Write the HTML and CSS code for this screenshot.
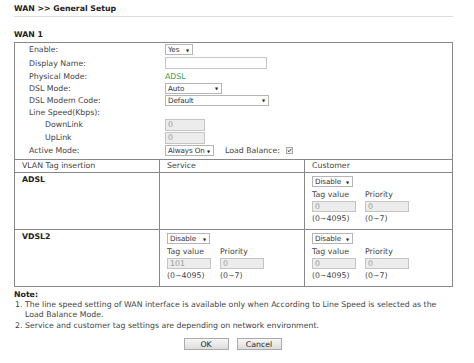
FILE: index.html
```html
<!DOCTYPE html>
<html>
<head>
<meta charset="utf-8">
<link rel="stylesheet" href="styles.css">
</head>
<body>
<div class="page">
  <div class="title">WAN &gt;&gt; General Setup</div>
  <div class="section">WAN 1</div>
  <div class="box">
    <div class="form">
      <div class="row r13"><span class="lbl">Enable:</span><span class="sel w28">Yes<i>▼</i></span></div>
      <div class="row r14"><span class="lbl">Display Name:</span><span class="txt w102"></span></div>
      <div class="row"><span class="lbl">Physical Mode:</span><span class="green">ADSL</span></div>
      <div class="row"><span class="lbl">DSL Mode:</span><span class="sel w57">Auto<i>▼</i></span></div>
      <div class="row"><span class="lbl">DSL Modem Code:</span><span class="sel w104">Default<i>▼</i></span></div>
      <div class="row"><span class="lbl">Line Speed(Kbps):</span></div>
      <div class="row r13"><span class="lbl sub">DownLink</span><span class="inp w40">0</span></div>
      <div class="row r13"><span class="lbl sub">UpLink</span><span class="inp w40">0</span></div>
      <div class="row r13"><span class="lbl">Active Mode:</span><span class="sel w49">Always On<i>▼</i></span><span class="lb">Load Balance:</span><span class="chk"><svg width="7" height="7" viewBox="0 0 7 7"><path d="M1.2 3.6 L2.8 5.2 L5.9 1.6" fill="none" stroke="#333" stroke-width="1.3"/></svg></span></div>
    </div>
    <div class="vlan">
      <div class="th">VLAN Tag insertion</div>
      <div class="th">Service</div>
      <div class="th last">Customer</div>

      <div class="td name"><b>ADSL</b></div>
      <div class="td"></div>
      <div class="td last">
        <div class="tag">
          <span class="sel w41">Disable<i>▼</i></span>
          <div class="pair"><span>Tag value</span><span>Priority</span></div>
          <div class="pair"><span class="inp w44">0</span><span class="inp w44">0</span></div>
          <div class="pair"><span>(0~4095)</span><span>(0~7)</span></div>
        </div>
      </div>

      <div class="td name bottom"><b>VDSL2</b></div>
      <div class="td bottom">
        <div class="tag">
          <span class="sel w43">Disable<i>▼</i></span>
          <div class="pair"><span>Tag value</span><span>Priority</span></div>
          <div class="pair"><span class="inp w44">101</span><span class="inp w44">0</span></div>
          <div class="pair"><span>(0~4095)</span><span>(0~7)</span></div>
        </div>
      </div>
      <div class="td last bottom">
        <div class="tag">
          <span class="sel w41">Disable<i>▼</i></span>
          <div class="pair"><span>Tag value</span><span>Priority</span></div>
          <div class="pair"><span class="inp w44">0</span><span class="inp w44">0</span></div>
          <div class="pair"><span>(0~4095)</span><span>(0~7)</span></div>
        </div>
      </div>
    </div>
  </div>
  <div class="note">
    <div class="note-h">Note:</div>
    <ol>
      <li>The line speed setting of WAN interface is available only when According to Line Speed is selected as the Load Balance Mode.</li>
      <li>Service and customer tag settings are depending on network environment.</li>
    </ol>
  </div>
  <div class="buttons">
    <span class="btn">OK</span>
    <span class="btn">Cancel</span>
  </div>
</div>
</body>
</html>
```
FILE: styles.css
```css
html, body {
  margin: 0;
  padding: 0;
  background: #fff;
}
body {
  font-family: "DejaVu Sans", Verdana, sans-serif;
  font-size: 7.8px;
  color: #444;
}
.page {
  width: 439px;
  margin-left: 14px;
}
.title {
  font-weight: bold;
  color: #222;
  height: 15px;
  line-height: 16px;
  padding-top: 1px;
  border-bottom: 1px solid #ddd;
}
.section {
  font-weight: bold;
  color: #222;
  margin-top: 12px;
  height: 11px;
  line-height: 11px;
}
.box {
  border: 1px solid #888;
  margin-top: 2px;
}
.form {
  padding-bottom: 2px;
}
.row {
  display: flex;
  align-items: center;
  height: 12px;
}
.row.r13 { height: 13px; }
.row.r14 { height: 14px; }
.lbl {
  width: 150px;
  padding-left: 14px;
  flex: none;
  box-sizing: border-box;
}
.lbl.sub { padding-left: 30px; }
.green { color: #3a9a3a; }
.sel {
  position: relative;
  display: inline-flex;
  align-items: center;
  box-sizing: border-box;
  height: 11px;
  border: 1px solid #b5b5b5;
  background: #fff;
  padding-left: 2px;
  color: #333;
  font-size: 7.2px;
  letter-spacing: -0.1px;
  white-space: nowrap;
  flex: none;
}
.sel i {
  font-style: normal;
  font-size: 4px;
  position: absolute;
  right: 3px;
  top: 2.5px;
  color: #222;
  letter-spacing: 0;
}
.txt, .inp {
  display: inline-block;
  box-sizing: border-box;
  border: 1px solid #c4c4c4;
  height: 12px;
  line-height: 10px;
  padding-left: 2px;
  flex: none;
}
.inp {
  background: #ececec;
  color: #999;
}
.w28 { width: 28px; }
.w40 { width: 40px; }
.w41 { width: 41px; }
.w43 { width: 43px; }
.w44 { width: 44px; }
.w49 { width: 49px; }
.w57 { width: 57px; }
.w102 { width: 102px; }
.w104 { width: 104px; }
.lb {
  margin-left: 11px;
}
.chk {
  display: inline-flex;
  width: 7px;
  height: 7px;
  border: 1px solid #aaa;
  background: #eee;
  margin-left: 6px;
  box-sizing: border-box;
  align-items: center;
  justify-content: center;
}
.chk svg { display: block; }
.vlan {
  display: grid;
  grid-template-columns: 145px 145px 1fr;
  grid-template-rows: 13px 57px 56px;
  border-top: 1px solid #888;
}
.th {
  border-right: 1px solid #888;
  border-bottom: 1px solid #888;
  padding-left: 7px;
  line-height: 12px;
}
.td {
  border-right: 1px solid #888;
  border-bottom: 1px solid #888;
  padding-left: 7px;
}
.th.last, .td.last { border-right: none; }
.td.bottom { border-bottom: none; }
.td.name {
  padding-left: 7px;
  padding-top: 2px;
  color: #222;
}
.tag {
  padding-top: 3px;
  display: flex;
  flex-direction: column;
  align-items: flex-start;
}
.pair {
  display: flex;
  align-items: center;
  height: 11px;
}
.pair span:first-child {
  width: 53px;
}
.pair:nth-child(2) { margin-top: 2px; }
.pair:nth-child(3) { height: 13px; }
.pair .inp { height: 11px; }
.pair .inp:first-child { width: 44px; margin-right: 9px; }
.note {
  margin-top: 2px;
}
.note-h {
  font-weight: bold;
  color: #222;
  line-height: 11px;
}
.note ol {
  margin: 0;
  padding-left: 11px;
}
.note li {
  line-height: 10px;
  margin-bottom: 1px;
}
.buttons {
  display: flex;
  justify-content: center;
  gap: 8px;
  margin-top: 7px;
  padding-right: 2px;
}
.btn {
  display: inline-flex;
  align-items: center;
  justify-content: center;
  width: 45px;
  height: 12px;
  box-sizing: border-box;
  border: 1px solid #aaa;
  background: linear-gradient(#f7f7f7, #dcdcdc);
  color: #222;
}
```
